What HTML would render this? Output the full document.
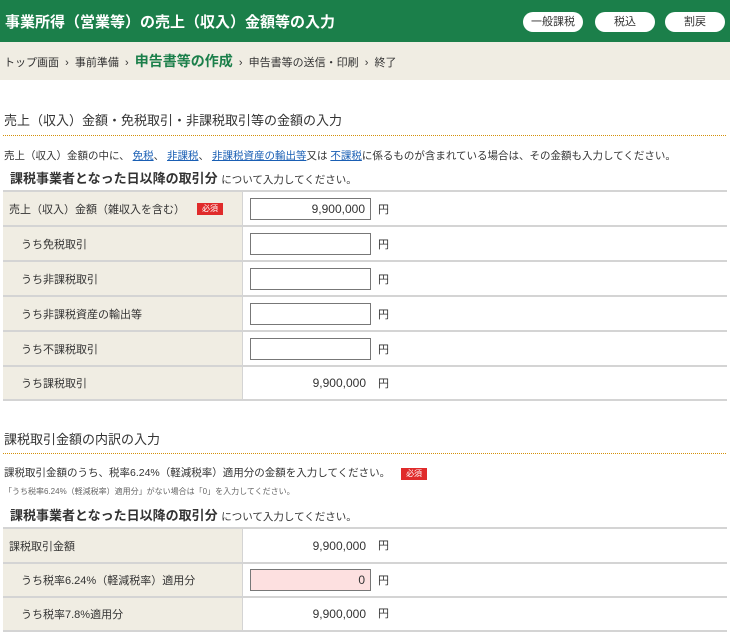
<!DOCTYPE html>
<html><head><meta charset="utf-8"><style>
*{margin:0;padding:0;box-sizing:border-box}
body{width:730px;height:636px;overflow:hidden;background:#fff;font-family:"Liberation Sans","Noto Sans CJK JP",sans-serif;color:#333;position:relative}
.a{position:absolute;white-space:nowrap}
.hdr{left:0;top:0;width:730px;height:42px;background:#1b7f4a}
.btn{top:12px;height:20px;background:#fff;border-radius:10px;font-size:11px;color:#333;text-align:center;line-height:20px;width:60px}
.bc{left:0;top:42px;width:730px;height:38px;background:#f0ede3}
.dot{left:3px;width:724px;height:1px;background:repeating-linear-gradient(90deg,#d4900a 0 1px,transparent 1px 2px)}
.tbl{left:3px;width:724px}
.row{position:absolute;left:0;width:724px;border-bottom:2px solid #d4d4d4}
.lab{position:absolute;left:0;top:0;bottom:0;width:240px;background:#f0ede3;border-right:1px solid #d4d4d4;font-size:11px;padding-left:6px;display:flex;align-items:center}
.inp{position:absolute;left:247px;width:121px;height:22px;border:1px solid #777;background:#fff;font-size:12px;text-align:right;padding-right:5px;line-height:20px}
.yen{position:absolute;left:375px;font-size:11px}
.val{position:absolute;left:247px;width:121px;text-align:right;padding-right:5px;font-size:12px}
.req{display:inline-block;background:#e02b2b;color:#fff;font-size:8px;padding:0 5px;line-height:12px;margin-left:12px}
a{color:#1a5fb4;text-decoration:underline}
</style></head><body>
<div class="a hdr"></div>
<div class="a" style="left:5px;top:11px;font-size:15px;font-weight:bold;color:#fff">事業所得（営業等）の売上（収入）金額等の入力</div>
<div class="a btn" style="left:523px">一般課税</div>
<div class="a btn" style="left:595px">税込</div>
<div class="a btn" style="left:665px">割戻</div>
<div class="a bc"></div>
<div class="a" style="left:4px;top:51px;font-size:11px;color:#333">トップ画面 &nbsp;› &nbsp;事前準備 &nbsp;› &nbsp;<span style="font-size:14px;font-weight:bold;color:#1b7f4a">申告書等の作成</span> &nbsp;› &nbsp;申告書等の送信・印刷 &nbsp;› &nbsp;終了</div>
<div class="a" style="left:4px;top:110px;font-size:13px">売上（収入）金額・免税取引・非課税取引等の金額の入力</div>
<div class="a dot" style="top:135px"></div>
<div class="a" style="left:4px;top:148px;font-size:10.5px">売上（収入）金額の中に、 <a>免税</a>、 <a>非課税</a>、 <a>非課税資産の輸出等</a>又は <a>不課税</a>に係るものが含まれている場合は、その金額も入力してください。</div>
<div class="a" style="left:10px;top:168px;font-size:13px;font-weight:bold">課税事業者となった日以降の取引分 <span style="font-size:10.5px;font-weight:normal">について入力してください。</span></div>
<div class="a tbl" style="top:190px;border-top:2px solid #d4d4d4;height:210px">
<div class="row" style="top:0;height:35px"><div class="lab">売上（収入）金額（雑収入を含む）<span class="req">必須</span></div><div class="inp" style="top:6px">9,900,000</div><div class="yen" style="top:9px">円</div></div>
<div class="row" style="top:35px;height:35px"><div class="lab" style="padding-left:18px">うち免税取引</div><div class="inp" style="top:6px"></div><div class="yen" style="top:9px">円</div></div>
<div class="row" style="top:70px;height:35px"><div class="lab" style="padding-left:18px">うち非課税取引</div><div class="inp" style="top:6px"></div><div class="yen" style="top:9px">円</div></div>
<div class="row" style="top:105px;height:35px"><div class="lab" style="padding-left:18px">うち非課税資産の輸出等</div><div class="inp" style="top:6px"></div><div class="yen" style="top:9px">円</div></div>
<div class="row" style="top:140px;height:35px"><div class="lab" style="padding-left:18px">うち不課税取引</div><div class="inp" style="top:6px"></div><div class="yen" style="top:9px">円</div></div>
<div class="row" style="top:175px;height:34px"><div class="lab" style="padding-left:18px">うち課税取引</div><div class="val" style="top:9px">9,900,000</div><div class="yen" style="top:8px">円</div></div>
</div>
<div class="a" style="left:4px;top:429px;font-size:13px">課税取引金額の内訳の入力</div>
<div class="a dot" style="top:453px"></div>
<div class="a" style="left:4px;top:465px;font-size:10.5px">課税取引金額のうち、税率6.24%（軽減税率）適用分の金額を入力してください。 <span class="req" style="margin-left:8px">必須</span></div>
<div class="a" style="left:4px;top:486px;font-size:8px;color:#666">「うち税率6.24%（軽減税率）適用分」がない場合は「0」を入力してください。</div>
<div class="a" style="left:10px;top:505px;font-size:13px;font-weight:bold">課税事業者となった日以降の取引分 <span style="font-size:10.5px;font-weight:normal">について入力してください。</span></div>
<div class="a tbl" style="top:527px;border-top:2px solid #d4d4d4;height:104px">
<div class="row" style="top:0;height:35px"><div class="lab">課税取引金額</div><div class="val" style="top:10px">9,900,000</div><div class="yen" style="top:8px">円</div></div>
<div class="row" style="top:35px;height:34px"><div class="lab" style="padding-left:18px">うち税率6.24%（軽減税率）適用分</div><div class="inp" style="top:5px;background:#fde0e0">0</div><div class="yen" style="top:8px">円</div></div>
<div class="row" style="top:69px;height:34px"><div class="lab" style="padding-left:18px">うち税率7.8%適用分</div><div class="val" style="top:9px">9,900,000</div><div class="yen" style="top:7px">円</div></div>
</div>
</body></html>
